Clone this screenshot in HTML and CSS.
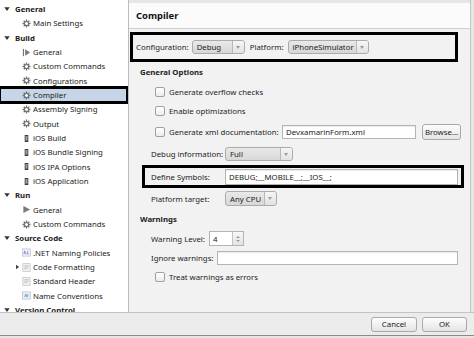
FILE: index.html
```html
<!DOCTYPE html>
<html lang="en">
  <head>
    <meta charset="UTF-8" />
    <title>Project Options - Compiler</title>
    <link rel="stylesheet" href="styles.css">
  </head>
  <body>
    <svg class="defs" width="0" height="0">
      <defs>
        <symbol id="gear" viewBox="0 0 10 10">
          <path d="M5 0.6V2.6M5 7.4V9.4M0.6 5H2.6M7.4 5H9.4M1.9 1.9L3.3 3.3M6.7 6.7L8.1 8.1M8.1 1.9L6.7 3.3M3.3 6.7L1.9 8.1" stroke="#6f6f6f" stroke-width="1.4" fill="none" />
          <circle cx="5" cy="5" r="2.3" stroke="#6f6f6f" stroke-width="1.2" fill="#fff" />
        </symbol>
        <symbol id="tri-down" viewBox="0 0 6 6">
          <path d="M0.3 1.2H5.7L3 5Z" fill="#333" />
        </symbol>
        <symbol id="tri-right" viewBox="0 0 6 6">
          <path d="M1.2 0.3V5.7L5 3Z" fill="#444" />
        </symbol>
        <symbol id="play-bar" viewBox="0 0 10 10">
          <rect x="1" y="1" width="1" height="8" fill="#555" />
          <path d="M3.5 1.5V8.5L9 5Z" fill="#7a7a7a" />
        </symbol>
        <symbol id="play" viewBox="0 0 10 10">
          <path d="M1.5 1V9L9 5Z" fill="#7a7a7a" />
        </symbol>
        <symbol id="phone" viewBox="0 0 10 10">
          <rect x="3" y="1" width="4" height="8" rx="0.6" fill="#3c3c3c" />
          <rect x="3.8" y="2.2" width="2.4" height="5.2" fill="#9a9a9a" />
        </symbol>
        <symbol id="doc" viewBox="0 0 10 10">
          <rect x="1" y="0.8" width="8" height="8.4" fill="#f4f4f4" stroke="#b5b5b5" stroke-width="0.7" />
          <path d="M2.5 3H7.5M2.5 4.7H7.5M2.5 6.4H6" stroke="#a8a8a8" stroke-width="0.7" />
        </symbol>
        <symbol id="naming" viewBox="0 0 10 10">
          <rect x="0.6" y="1" width="8.8" height="8" fill="#eef0fa" stroke="#b4b8d0" stroke-width="0.7" />
          <path d="M2 6.8L3 3.2L4 6.8M2.4 5.5H3.6M5.2 6.8V6.2M6.2 3.2V6.8H7.6" stroke="#6a6fc0" stroke-width="0.7" fill="none" />
        </symbol>
        <symbol id="names" viewBox="0 0 10 10">
          <rect x="0.6" y="1" width="8.8" height="8" fill="#eaf0f8" stroke="#aab8cc" stroke-width="0.7" />
          <path d="M3 6.8L4.2 3.4L5.4 6.8M6.4 3.4V6.8" stroke="#5a7fb8" stroke-width="0.8" fill="none" />
        </symbol>
      </defs>
    </svg>

    <div class="window">
      <div class="main">
        <ul class="tree">
          <li class="cat"><svg class="disc"><use href="#tri-down" /></svg>General</li>
          <li class="item"><svg class="ico"><use href="#gear" /></svg>Main Settings</li>
          <li class="cat"><svg class="disc"><use href="#tri-down" /></svg>Build</li>
          <li class="item"><svg class="ico"><use href="#play-bar" /></svg>General</li>
          <li class="item"><svg class="ico"><use href="#gear" /></svg>Custom Commands</li>
          <li class="item"><svg class="ico"><use href="#gear" /></svg>Configurations</li>
          <li class="item selected"><svg class="ico"><use href="#gear" /></svg>Compiler</li>
          <li class="item"><svg class="ico"><use href="#gear" /></svg>Assembly Signing</li>
          <li class="item"><svg class="ico"><use href="#gear" /></svg>Output</li>
          <li class="item"><svg class="ico"><use href="#phone" /></svg>iOS Build</li>
          <li class="item"><svg class="ico"><use href="#phone" /></svg>iOS Bundle Signing</li>
          <li class="item"><svg class="ico"><use href="#phone" /></svg>iOS IPA Options</li>
          <li class="item"><svg class="ico"><use href="#phone" /></svg>iOS Application</li>
          <li class="cat"><svg class="disc"><use href="#tri-down" /></svg>Run</li>
          <li class="item"><svg class="ico"><use href="#play" /></svg>General</li>
          <li class="item"><svg class="ico"><use href="#gear" /></svg>Custom Commands</li>
          <li class="cat"><svg class="disc"><use href="#tri-down" /></svg>Source Code</li>
          <li class="item"><svg class="ico"><use href="#naming" /></svg>.NET Naming Policies</li>
          <li class="item has-child"><svg class="sub-disc"><use href="#tri-right" /></svg><svg class="ico"><use href="#doc" /></svg>Code Formatting</li>
          <li class="item"><svg class="ico"><use href="#doc" /></svg>Standard Header</li>
          <li class="item"><svg class="ico"><use href="#names" /></svg>Name Conventions</li>
          <li class="cat"><svg class="disc"><use href="#tri-down" /></svg>Version Control</li>
        </ul>

        <div class="panel">
          <div class="panel-title">Compiler</div>

          <div class="hl-box config-bar">
            <span>Configuration:</span>
            <span class="popup debug-popup"><span class="popup-val">Debug</span><span class="popup-arrow"></span></span>
            <span class="platform-lbl">Platform:</span>
            <span class="popup platform-popup"><span class="popup-val">iPhoneSimulator</span><span class="popup-arrow"></span></span>
          </div>

          <div class="section-title">General Options</div>
          <div class="check-row"><span class="check"></span>Generate overflow checks</div>
          <div class="check-row"><span class="check"></span>Enable optimizations</div>
          <div class="check-row xml-row">
            <span class="check"></span>Generate xml documentation:
            <span class="field xml-field">DevxamarinForm.xml</span>
            <span class="btn browse-btn">Browse...</span>
          </div>

          <div class="field-row debug-row">
            <span class="field-lbl">Debug information:</span>
            <span class="popup full-popup"><span class="popup-val">Full</span><span class="popup-arrow"></span></span>
          </div>

          <div class="hl-box symbols-box">
            <span class="field-lbl">Define Symbols:</span>
            <span class="field symbols-field">DEBUG;__MOBILE__;__IOS__;</span>
          </div>

          <div class="field-row platform-row">
            <span class="field-lbl">Platform target:</span>
            <span class="popup cpu-popup"><span class="popup-val">Any CPU</span><span class="popup-arrow"></span></span>
          </div>

          <div class="section-title warnings-title">Warnings</div>
          <div class="field-row level-row">
            <span>Warning Level:</span>
            <span class="spin"><span class="spin-val">4</span><span class="stepper"><span class="step-up"></span><span class="step-down"></span></span></span>
          </div>
          <div class="field-row ignore-row">
            <span>Ignore warnings:</span>
            <span class="field ignore-field"></span>
          </div>
          <div class="check-row treat-row"><span class="check"></span>Treat warnings as errors</div>
        </div>
      </div>

      <div class="footer">
        <span class="btn footer-btn cancel-btn">Cancel</span>
        <span class="btn footer-btn ok-btn">OK</span>
      </div>
    </div>
  </body>
</html>
```

FILE: styles.css
```css
body {
  margin: 0;
  background: #e6e6e6;
  font-family: "Noto Sans", sans-serif;
  font-size: 7.8px;
  color: #222;
  white-space: nowrap;
}
.defs {
  position: absolute;
}
.window {
  width: 474px;
  height: 338px;
  display: flex;
  flex-direction: column;
}
.main {
  display: flex;
  height: 312px;
}

/* sidebar tree */
.tree {
  list-style: none;
  margin: 0;
  padding: 2px 0 0;
  width: 128px;
  background: #fff;
  border-right: 1px solid #bcbcbc;
  overflow: hidden;
}
.tree li {
  height: 14.33px;
  display: flex;
  align-items: center;
}
.cat {
  font-weight: bold;
  padding-left: 4px;
}
.disc {
  width: 6px;
  height: 6px;
  margin-right: 5px;
}
.item {
  padding-left: 22px;
}
.ico {
  width: 9px;
  height: 9px;
  margin-right: 2px;
  flex-shrink: 0;
}
.has-child {
  padding-left: 15px;
}
.sub-disc {
  width: 5px;
  height: 6px;
  margin-right: 2px;
}
.selected {
  background: #c6d5e7;
  outline: 3px solid #000;
  outline-offset: -1px;
  margin-right: 1px;
}

/* right panel */
.panel {
  width: 341px;
  background: #f2f2f2;
  border-right: 1px solid #c4c4c4;
  display: flex;
  flex-direction: column;
}
.panel-title {
  height: 25px;
  border-top: 3px solid #e6e6e6;
  border-bottom: 1px solid #cfcfcf;
  background: #fbfbfb;
  padding-left: 7px;
  display: flex;
  align-items: center;
  font-weight: bold;
  font-size: 9.4px;
  color: #111;
}
.hl-box {
  border: 3px solid #000;
  box-sizing: border-box;
  display: flex;
  align-items: center;
}
.config-bar {
  margin: 3px 0 0 1px;
  width: 328px;
  height: 30px;
  padding-left: 3px;
  gap: 3px;
}
.platform-lbl {
  margin-left: 2px;
}
.section-title {
  height: 20px;
  padding-left: 11px;
  display: flex;
  align-items: center;
  font-weight: bold;
}
.check-row {
  height: 19px;
  padding-left: 26px;
  display: flex;
  align-items: center;
}
.check {
  width: 8px;
  height: 8px;
  border: 1px solid #a0a0a0;
  border-radius: 2px;
  background: linear-gradient(#fff, #ececec);
  margin-right: 4px;
}
.xml-row {
  height: 23px;
}
.field {
  height: 13px;
  box-sizing: border-box;
  border: 1px solid #b4b4b4;
  background: #fff;
  box-shadow: inset 0 1px 1px rgba(0, 0, 0, 0.08);
  padding-left: 3px;
  display: flex;
  align-items: center;
}
.xml-field {
  margin-left: auto;
  width: 134px;
  height: 14px;
}
.btn {
  box-sizing: border-box;
  border: 1px solid #a9a9a9;
  border-radius: 3px;
  background: linear-gradient(#fdfdfd, #e4e4e4);
  display: flex;
  align-items: center;
  justify-content: center;
}
.browse-btn {
  width: 39px;
  height: 16px;
  margin: 0 9px 0 6px;
}
.popup {
  height: 14px;
  box-sizing: border-box;
  border: 1px solid #ababab;
  border-radius: 3px;
  background: linear-gradient(#e9e9e9, #d7d7d7);
  display: flex;
}
.popup-val {
  flex: 1;
  padding-left: 4px;
  display: flex;
  align-items: center;
}
.popup-arrow {
  width: 11px;
  border-left: 1px solid #b8b8b8;
  background: linear-gradient(#f6f6f6, #e2e2e2);
  border-radius: 0 2px 2px 0;
  position: relative;
}
.popup-arrow::after {
  content: "";
  position: absolute;
  left: 3px;
  top: 5px;
  border-left: 2.5px solid transparent;
  border-right: 2.5px solid transparent;
  border-top: 3px solid #9a9a9a;
}
.debug-popup {
  width: 53px;
}
.platform-popup {
  width: 81px;
  margin-left: 1px;
}
.field-row {
  height: 20px;
  padding-left: 22px;
  display: flex;
  align-items: center;
}
.field-lbl {
  width: 74px;
}
.debug-row {
  height: 22px;
}
.full-popup {
  width: 68px;
}
.symbols-box {
  margin-left: 13px;
  width: 322px;
  height: 23px;
  padding-left: 6px;
}
.symbols-field {
  width: 233px;
  height: 16px;
}
.platform-row {
  height: 21px;
}
.cpu-popup {
  width: 52px;
  height: 15px;
}
.level-row {
  height: 19px;
}
.spin {
  margin-left: 4px;
  width: 35px;
  height: 15px;
  box-sizing: border-box;
  border: 1px solid #b4b4b4;
  background: #fff;
  display: flex;
}
.spin-val {
  flex: 1;
  padding-left: 3px;
  display: flex;
  align-items: center;
}
.stepper {
  width: 10px;
  border-left: 1px solid #c4c4c4;
  background: linear-gradient(#f8f8f8, #e4e4e4);
  display: flex;
  flex-direction: column;
  align-items: center;
  justify-content: center;
  gap: 2px;
}
.step-up {
  border-left: 2px solid transparent;
  border-right: 2px solid transparent;
  border-bottom: 2px solid #999;
}
.step-down {
  border-left: 2px solid transparent;
  border-right: 2px solid transparent;
  border-top: 2px solid #999;
}
.ignore-field {
  margin-left: 4px;
  width: 241px;
  height: 14px;
}
.treat-row {
  height: 18px;
}

/* footer */
.footer {
  height: 22px;
  border-top: 1px solid #c4c4c4;
  border-bottom: 1px solid #8a8a8a;
  background: #ececec;
  display: flex;
  justify-content: flex-end;
  align-items: center;
  gap: 5px;
  padding-right: 7px;
}
.footer-btn {
  height: 15px;
}
.cancel-btn {
  width: 46px;
}
.ok-btn {
  width: 45px;
}
```
